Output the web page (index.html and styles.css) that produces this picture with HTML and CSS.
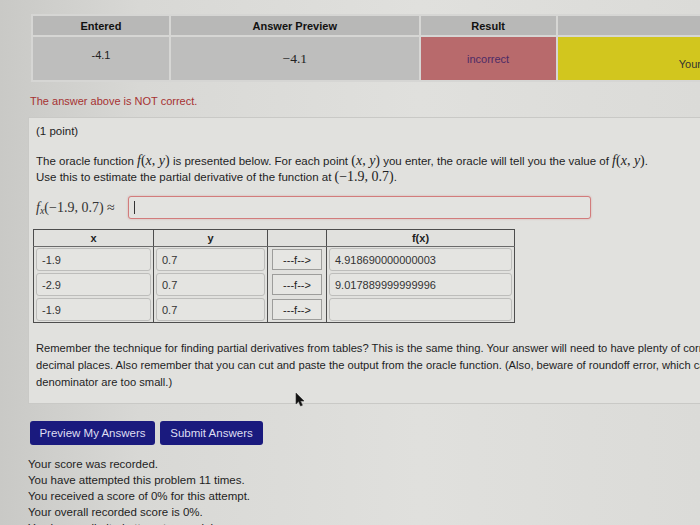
FILE: index.html
```html
<!DOCTYPE html>
<html>
<head>
<meta charset="utf-8">
<link rel="stylesheet" href="styles.css">
</head>
<body>
<div class="page">
  <table class="results">
    <tr class="hdr">
      <th class="c1">Entered</th>
      <th class="c2">Answer Preview</th>
      <th class="c3">Result</th>
      <th class="c4"></th>
    </tr>
    <tr class="row">
      <td class="c1 up">-4.1</td>
      <td class="c2 math">&minus;4.1</td>
      <td class="c3 bad">incorrect</td>
      <td class="c4 msg">Your</td>
    </tr>
  </table>

  <div class="notice">The answer above is NOT correct.</div>

  <div class="problem">
    <div class="points">(1 point)</div>
    <p class="statement">The oracle function <span class="m">f</span><span class="mr">(</span><span class="m">x</span><span class="mr">, </span><span class="m">y</span><span class="mr">)</span> is presented below. For each point <span class="mr">(</span><span class="m">x</span><span class="mr">, </span><span class="m">y</span><span class="mr">)</span> you enter, the oracle will tell you the value of <span class="m">f</span><span class="mr">(</span><span class="m">x</span><span class="mr">, </span><span class="m">y</span><span class="mr">)</span>.<br>Use this to estimate the partial derivative of the function at <span class="mr">(&minus;1.9, 0.7)</span>.</p>
    <div class="answer">
      <span class="label"><span class="m">f</span><sub class="m">x</sub><span class="mr">(&minus;1.9, 0.7) &asymp;</span></span>
      <div class="input"><span class="caret"></span></div>
    </div>
    <table class="oracle">
      <tr class="ohdr"><th class="oc1">x</th><th class="oc2">y</th><th class="oc3"></th><th class="oc4">f(x)</th></tr>
      <tr><td><div class="box">-1.9</div></td><td><div class="box">0.7</div></td><td><div class="btn">---f--&gt;</div></td><td><div class="box">4.918690000000003</div></td></tr>
      <tr><td><div class="box">-2.9</div></td><td><div class="box">0.7</div></td><td><div class="btn">---f--&gt;</div></td><td><div class="box">9.017889999999996</div></td></tr>
      <tr><td><div class="box">-1.9</div></td><td><div class="box">0.7</div></td><td><div class="btn">---f--&gt;</div></td><td><div class="box"></div></td></tr>
    </table>
    <p class="hint">Remember the technique for finding partial derivatives from tables? This is the same thing. Your answer will need to have plenty of correct<br>decimal places. Also remember that you can cut and paste the output from the oracle function. (Also, beware of roundoff error, which can occur if the<br>denominator are too small.)</p>
  </div>

  <div class="buttons">
    <button class="sub">Preview My Answers</button>
    <button class="sub">Submit Answers</button>
  </div>

  <div class="score">
    <div>Your score was recorded.</div>
    <div>You have attempted this problem 11 times.</div>
    <div>You received a score of 0% for this attempt.</div>
    <div>Your overall recorded score is 0%.</div>
    <div>You have unlimited attempts remaining.</div>
  </div>
</div>
<svg class="cursor" width="12" height="16" viewBox="0 0 12 16"><path d="M1 1 L1 12 L3.6 9.6 L5.6 14 L7.4 13.2 L5.5 9 L9 9 Z" fill="#111" stroke="#333" stroke-width="0.6"/></svg>
</body>
</html>
```

FILE: styles.css
```css
html, body {
  margin: 0;
  padding: 0;
  width: 700px;
  height: 525px;
  overflow: hidden;
}
body {
  background: linear-gradient(90deg, #c9c9c6 0%, #d8d8d5 20%, #e0e0dd 60%, #dbdbd8 100%);
  font-family: "Liberation Sans", Arial, sans-serif;
  font-size: 11.5px;
  color: #1e1e1e;
  position: relative;
}
.page {
  padding: 14px 0 0 0;
  width: 760px;
}
.results {
  margin-left: 31px;
  border-collapse: separate;
  border-spacing: 2px;
  background: #d6d6d4;
  table-layout: fixed;
  width: 740px;
  font-size: 11px;
}
.results th {
  background: #b8b8b7;
  height: 19px;
  font-weight: bold;
  font-size: 11px;
  color: #111;
  padding: 0;
}
.results td {
  background: #bebebd;
  height: 43px;
  text-align: center;
  padding: 0;
  color: #222;
}
.results .c1 { width: 135px; }
.results .c2 { width: 246px; }
.results .c3 { width: 134px; }
.results .c4 { width: 210px; }
.results .up { vertical-align: top; padding-top: 12px; height: 31px; }
.results .math { font-family: "Liberation Serif", "Times New Roman", serif; font-size: 13.5px; }
.results .bad { background: #b86a6c; color: #4c2a66; }
.results .msg { background: #d2c61e; text-align: right; padding: 10px 68px 0 0; height: 33px; color: #333; }

.notice {
  color: #a63232;
  margin: 13px 0 0 30px;
  height: 20px;
  font-size: 11px;
}
.problem {
  margin: 2px 0 0 28px;
  background: #e1e1de;
  border: 1px solid #c9c9c6;
  padding: 5px 8px 14px 7px;
  height: 266px;
}
.points { line-height: 16px; }
.statement {
  margin: 14px 0 0 0;
  line-height: 16px;
}
.m { font-family: "Liberation Serif", "Times New Roman", serif; font-style: italic; font-size: 14px; }
.mr { font-family: "Liberation Serif", "Times New Roman", serif; font-size: 14px; }
sub.m { font-size: 10px; vertical-align: -2px; }
.answer {
  display: flex;
  align-items: center;
  margin-top: 10px;
  height: 25px;
  gap: 4px;
}
.label { color: #333; width: 88px; white-space: nowrap; }
.input {
  width: 456px;
  height: 21px;
  border: 1.5px solid #d27c7c;
  border-radius: 3px;
  background: #e3e3e0;
  box-shadow: 0 0 2px rgba(200,80,80,0.4);
  display: flex;
  align-items: center;
  padding-left: 5px;
}
.caret { width: 1px; height: 13px; background: #333; }
.oracle {
  margin: 9px 0 0 -3px;
  border-collapse: collapse;
  border: 1px solid #4d4d4d;
  width: 482px;
  table-layout: fixed;
}
.oracle th {
  height: 16px;
  padding: 0;
  font-size: 11px;
  border-left: 1px solid #4d4d4d;
  border-bottom: 1px solid #6a6a6a;
}
.oracle .oc1 { width: 119px; }
.oracle .oc2 { width: 113px; }
.oracle .oc3 { width: 58px; }
.oracle td {
  padding: 1px 2px;
  height: 23px;
  border-left: 1px solid #4d4d4d;
}
.box {
  height: 21px;
  border: 1px solid #bdbdbb;
  border-radius: 3px;
  background: #e4e4e1;
  display: flex;
  align-items: center;
  padding-left: 5px;
  color: #333;
  font-size: 11px;
}
.btn {
  height: 19px;
  margin: 1px 2px;
  border: 1px solid #9d9d9b;
  background: #e6e6e3;
  display: flex;
  align-items: center;
  justify-content: center;
  color: #222;
  font-size: 11px;
}
.hint {
  margin: 17px 0 0 0;
  line-height: 17px;
  font-size: 11.2px;
  white-space: nowrap;
  color: #1e1e1e;
}
.buttons {
  display: flex;
  gap: 5px;
  margin: 17px 0 0 30px;
}
.sub {
  background: #1a1a7e;
  color: #dedef2;
  border: none;
  border-radius: 3px;
  height: 24px;
  font-family: "Liberation Sans", Arial, sans-serif;
  font-size: 11.5px;
  padding: 0 6px;
}
.sub:first-child { width: 125px; }
.sub:last-child { width: 103px; }
.score {
  margin: 11px 0 0 28px;
  line-height: 16px;
  color: #1e1e1e;
}
.cursor {
  position: absolute;
  left: 295px;
  top: 392px;
}
```
